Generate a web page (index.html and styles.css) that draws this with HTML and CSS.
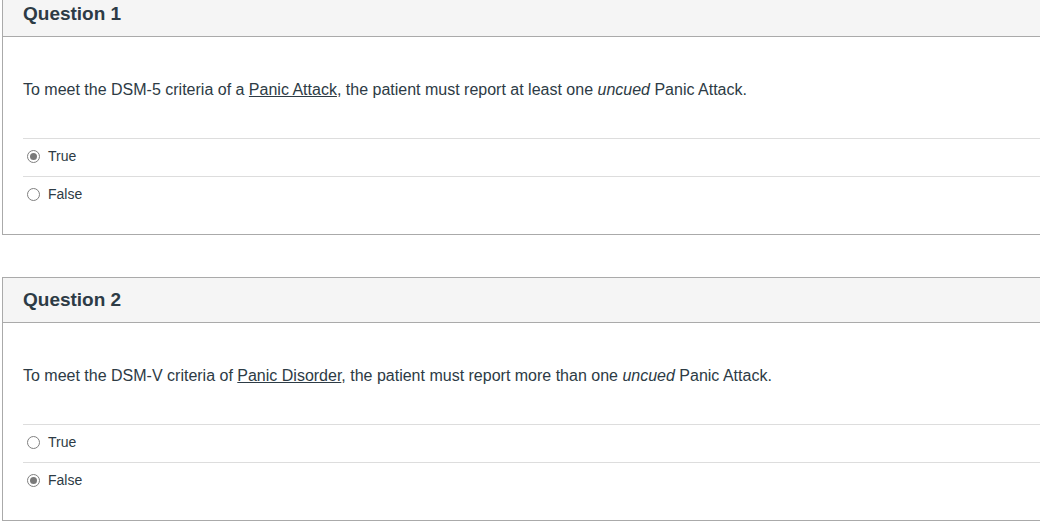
FILE: index.html
```html
<!DOCTYPE html>
<html>
<head>
<meta charset="utf-8">
<link rel="stylesheet" href="styles.css">
</head>
<body>
<div class="page">
  <div class="question first">
    <div class="q-header">Question 1</div>
    <div class="q-body">
      <div class="q-text">To meet the DSM-5 criteria of a <a href="#">Panic Attack</a>, the patient must report at least one <em>uncued</em> Panic Attack.</div>
      <div class="answers">
        <div class="answer"><span class="radio checked"></span><span class="label">True</span></div>
        <div class="answer"><span class="radio"></span><span class="label">False</span></div>
      </div>
    </div>
  </div>
  <div class="question">
    <div class="q-header">Question 2</div>
    <div class="q-body">
      <div class="q-text">To meet the DSM-V criteria of <a href="#">Panic Disorder</a>, the patient must report more than one <em>uncued</em> Panic Attack.</div>
      <div class="answers">
        <div class="answer"><span class="radio"></span><span class="label">True</span></div>
        <div class="answer"><span class="radio checked"></span><span class="label">False</span></div>
      </div>
    </div>
  </div>
</div>
</body>
</html>
```
FILE: styles.css
```css
html, body {
  margin: 0;
  padding: 0;
  background: #fff;
  overflow: hidden;
}
body {
  font-family: "Liberation Sans", Arial, sans-serif;
  color: #2d3b45;
}
.page {
  padding-left: 2px;
  margin-right: -40px;
}
.question {
  border: 1px solid #aaaaaa;
  margin-bottom: 42px;
}
.question:last-child {
  margin-bottom: 0;
}
.question.first {
  margin-top: -9px;
}
.q-header {
  background: #f5f5f5;
  border-bottom: 1px solid #aaaaaa;
  height: 44px;
  line-height: 44px;
  padding-left: 20px;
  font-size: 19px;
  font-weight: bold;
  color: #2d3b45;
}
.q-body {
  padding: 40px 0 20px 20px;
}
.q-text {
  font-size: 16px;
  line-height: 26px;
  height: 24px;
  margin-bottom: 37px;
}
.q-text a {
  color: #2d3b45;
  text-decoration: underline;
}
.answer {
  border-top: 1px solid #dddddd;
  height: 38px;
  display: flex;
  align-items: center;
  padding-left: 4px;
  padding-bottom: 4px;
  box-sizing: border-box;
}
.radio {
  width: 13px;
  height: 13px;
  border: 1px solid #808080;
  border-radius: 50%;
  box-sizing: border-box;
  background: #fff;
  position: relative;
  flex: none;
  margin-top: 1px;
}
.radio.checked::after {
  content: "";
  position: absolute;
  left: 2px;
  top: 2px;
  width: 7px;
  height: 7px;
  border-radius: 50%;
  background: #7a7a7a;
}
.label {
  font-size: 14px;
  margin-left: 8px;
}
```
